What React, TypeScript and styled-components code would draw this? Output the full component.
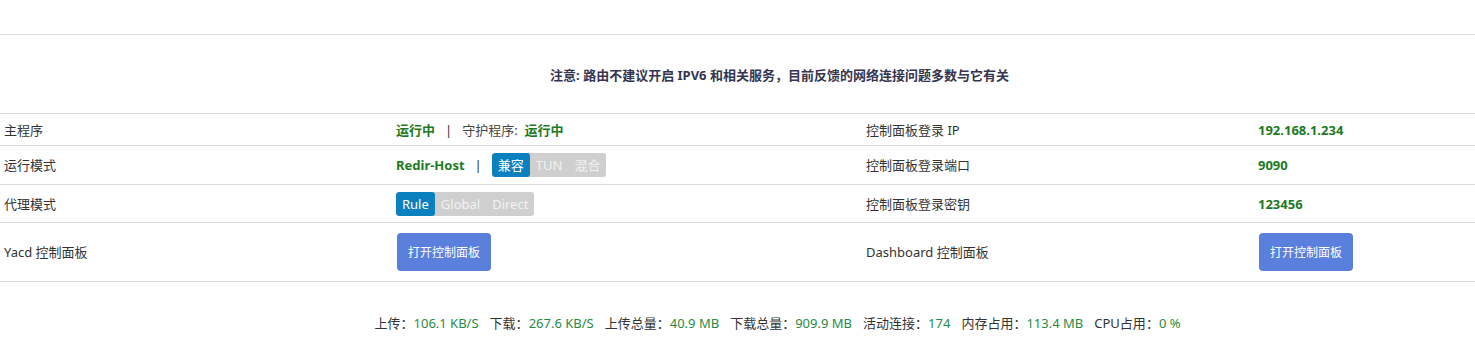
import React from 'react';
import styled, { createGlobalStyle } from 'styled-components';

const GlobalStyle = createGlobalStyle`
  html, body {
    margin: 0;
    padding: 0;
    background: #fff;
  }
  body {
    font-family: "Noto Sans", "Noto Sans CJK SC", sans-serif;
    font-size: 13px;
    color: #333;
  }
`;

const Page = styled.div`
  width: 1475px;
  padding-top: 34px;
`;

const Notice = styled.div`
  border-top: 1px solid #dcdcdc;
  height: 78px;
  display: flex;
  align-items: center;
  justify-content: center;
  padding-left: 84px;
  font-weight: 700;
  font-size: 13px;
  color: #35354f;
`;

const Table = styled.div`
  display: grid;
  grid-template-columns: 392px 470px 392px 1fr;
  border-bottom: 1px solid #dcdcdc;
`;

const Cell = styled.div<{ $h: number }>`
  border-top: 1px solid #dcdcdc;
  height: ${p => p.$h}px;
  display: flex;
  align-items: center;
  padding: 0 4px;
  line-height: 18px;
  white-space: nowrap;
`;

const Label = styled.span`
  color: #333;
`;

const Good = styled.span`
  color: #1d7a24;
  font-weight: 700;
`;

const Muted = styled.span`
  color: #444;
`;

const Sep = styled.span`
  color: #333;
  margin: 0 10px;
`;

const Segment = styled.div`
  display: inline-flex;
  border-radius: 3px;
  overflow: hidden;
  background: #cfcfcf;
`;

const SegItem = styled.span<{ $on?: boolean }>`
  height: 24px;
  display: flex;
  align-items: center;
  padding: 0 6px;
  font-size: 13px;
  color: ${p => (p.$on ? '#fff' : '#f2f2f2')};
  background: ${p => (p.$on ? '#0b80bf' : 'transparent')};
  border-radius: ${p => (p.$on ? '3px' : '0')};
`;

const OpenButton = styled.button`
  height: 38px;
  width: 94px;
  margin-left: 1px;
  border: none;
  border-radius: 4px;
  background: #5a7fdc;
  color: #fff;
  font-family: inherit;
  font-size: 12px;
  cursor: pointer;
`;

const Stats = styled.div`
  display: flex;
  justify-content: center;
  padding: 32px 0 0 80px;
  font-size: 13px;
  line-height: 18px;
  gap: 11px;
`;

const Stat = styled.span`
  color: #333;
`;

const StatValue = styled.span`
  color: #2a8a45;
`;

const stats: [string, string][] = [
  ['上传', '106.1 KB/S'],
  ['下载', '267.6 KB/S'],
  ['上传总量', '40.9 MB'],
  ['下载总量', '909.9 MB'],
  ['活动连接', '174'],
  ['内存占用', '113.4 MB'],
  ['CPU占用', '0 %'],
];

export default function App() {
  return (
    <Page>
      <GlobalStyle />
      <Notice>注意: 路由不建议开启 IPV6 和相关服务，目前反馈的网络连接问题多数与它有关</Notice>
      <Table>
        <Cell $h={31}><Label>主程序</Label></Cell>
        <Cell $h={31}>
          <Good>运行中</Good>
          <Sep>|</Sep>
          <Muted>守护程序:&nbsp;&nbsp;</Muted>
          <Good>运行中</Good>
        </Cell>
        <Cell $h={31}><Label>控制面板登录 IP</Label></Cell>
        <Cell $h={31}><Good>192.168.1.234</Good></Cell>

        <Cell $h={38}><Label>运行模式</Label></Cell>
        <Cell $h={38}>
          <Good>Redir-Host</Good>
          <Sep>|</Sep>
          <Segment>
            <SegItem $on>兼容</SegItem>
            <SegItem>TUN</SegItem>
            <SegItem>混合</SegItem>
          </Segment>
        </Cell>
        <Cell $h={38}><Label>控制面板登录端口</Label></Cell>
        <Cell $h={38}><Good>9090</Good></Cell>

        <Cell $h={37}><Label>代理模式</Label></Cell>
        <Cell $h={37}>
          <Segment>
            <SegItem $on>Rule</SegItem>
            <SegItem>Global</SegItem>
            <SegItem>Direct</SegItem>
          </Segment>
        </Cell>
        <Cell $h={37}><Label>控制面板登录密钥</Label></Cell>
        <Cell $h={37}><Good>123456</Good></Cell>

        <Cell $h={58}><Label>Yacd 控制面板</Label></Cell>
        <Cell $h={58}><OpenButton>打开控制面板</OpenButton></Cell>
        <Cell $h={58}><Label>Dashboard 控制面板</Label></Cell>
        <Cell $h={58}><OpenButton>打开控制面板</OpenButton></Cell>
      </Table>
      <Stats>
        {stats.map(([k, v]) => (
          <Stat key={k}>
            {k}：<StatValue>{v}</StatValue>
          </Stat>
        ))}
      </Stats>
    </Page>
  );
}
